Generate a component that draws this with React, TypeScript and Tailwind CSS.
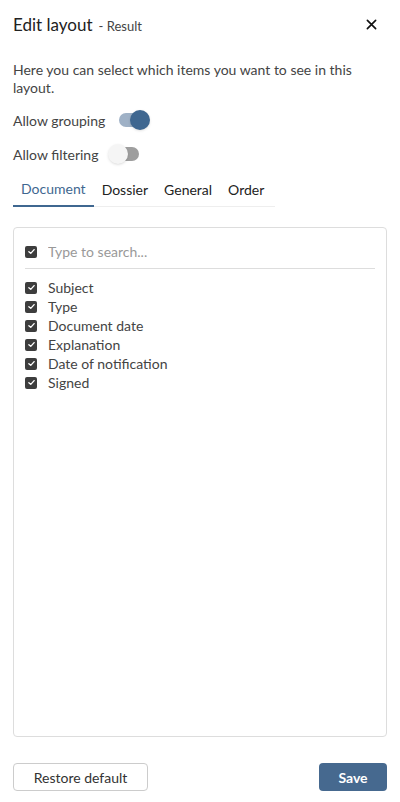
import React, { useState } from 'react';

const font = { fontFamily: 'Lato, "Noto Sans", sans-serif' };

const ITEMS = ['Subject', 'Type', 'Document date', 'Explanation', 'Date of notification', 'Signed'];
const TABS = ['Document', 'Dossier', 'General', 'Order'];

const Check: React.FC = () => (
  <span className="w-3 h-3 rounded-[2px] bg-[#3d3d3d] flex items-center justify-center shrink-0">
    <svg viewBox="0 0 12 12" className="w-[9px] h-[9px]">
      <path d="M2.5 6.2 L5 8.5 L9.5 3.5" fill="none" stroke="white" strokeWidth="1.8" strokeLinecap="round" strokeLinejoin="round" />
    </svg>
  </span>
);

const Toggle: React.FC<{ on: boolean }> = ({ on }) => (
  <span className="relative inline-flex items-center w-[34px] h-5">
    <span className={`absolute left-[3px] right-[3px] h-[14px] rounded-full ${on ? 'bg-[#9fb1c6]' : 'bg-[#9e9e9e]'}`} />
    <span
      className={`absolute w-5 h-5 rounded-full shadow ${on ? 'right-0 bg-[#3f6790]' : 'left-0 bg-[#f5f5f5]'}`}
    />
  </span>
);

export default function App() {
  const [tab, setTab] = useState('Document');

  return (
    <div className="w-[400px] h-[802px] bg-white text-[#333] flex flex-col px-[13px]" style={font}>
      {/* Header */}
      <div className="flex items-center justify-between h-[48px] pt-[1px]">
        <div className="flex items-baseline gap-[6px]">
          <span className="text-[17px] text-[#222]">Edit layout</span>
          <span className="text-[13px] text-[#444]">- Result</span>
        </div>
        <svg viewBox="0 0 12 12" className="w-[11px] h-[11px] mr-[10px]">
          <path d="M1.5 1.5 L10.5 10.5 M10.5 1.5 L1.5 10.5" stroke="#111" strokeWidth="1.8" strokeLinecap="round" />
        </svg>
      </div>

      <p className="mt-[13px] text-[14px] leading-[18px] text-[#444] pr-8">
        Here you can select which items you want to see in this layout.
      </p>

      <div className="mt-[13px] flex items-center gap-[11px] h-[20px] text-[14px] text-[#444]">
        <span>Allow grouping</span>
        <Toggle on />
      </div>
      <div className="mt-[14px] flex items-center gap-[10px] h-[20px] text-[14px] text-[#444]">
        <span>Allow filtering</span>
        <Toggle on={false} />
      </div>

      {/* Tabs */}
      <div className="mt-[12px] flex w-[262px] border-b border-[#eee]">
        {TABS.map((t) => (
          <button
            key={t}
            onClick={() => setTab(t)}
            className={`px-2 pb-[6px] pt-[2px] text-[14px] ${
              tab === t ? 'text-[#3f6790] border-b-2 border-[#3f6790] -mb-px' : 'text-[#222]'
            }`}
          >
            {t}
          </button>
        ))}
      </div>

      {/* List box */}
      <div className="mt-[20px] flex-1 border border-[#ddd] rounded-[4px] px-[11px] pt-[13px]">
        <div className="flex items-center gap-[11px] pb-[6px] border-b border-[#ddd]">
          <Check />
          <input
            placeholder="Type to search..."
            className="flex-1 text-[14px] outline-none placeholder:text-[#999]"
          />
        </div>
        <ul className="mt-[9px] flex flex-col">
          {ITEMS.map((item) => (
            <li key={item} className="flex items-center gap-[11px] h-[19px] text-[14px] text-[#444]">
              <Check />
              <span>{item}</span>
            </li>
          ))}
        </ul>
      </div>

      {/* Footer */}
      <div className="flex items-center justify-between mt-[26px] mb-[11px]">
        <button className="h-[28px] w-[135px] border border-[#ccc] rounded-[4px] text-[14px] text-[#333]">
          Restore default
        </button>
        <button className="h-[28px] w-[68px] rounded-[4px] bg-[#46698f] text-white text-[14px] font-bold">
          Save
        </button>
      </div>
    </div>
  );
}
